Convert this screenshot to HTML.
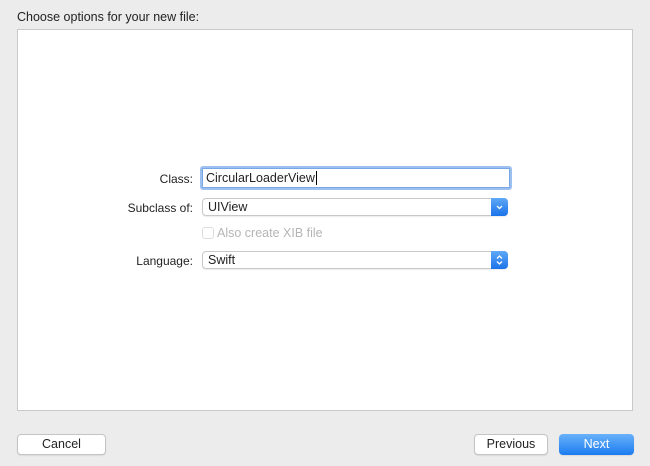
<!DOCTYPE html>
<html><head><style>
body{margin:0;width:650px;height:466px;background:#ececec;font-family:"Liberation Sans",sans-serif;font-size:12px;color:#222;position:relative;overflow:hidden}
.a{position:absolute}
.lbl{position:absolute;right:457px;text-align:right;white-space:nowrap}
.pop{position:absolute;left:202px;width:306px;height:18px;background:#fff;border:1px solid #c8c8c8;border-radius:4px;box-sizing:border-box;box-shadow:0 1px 1px rgba(0,0,0,.08)}
.pop span{position:absolute;left:5px;top:1px;font-size:12.5px}
.pb{position:absolute;right:-1px;top:-1px;width:17px;height:18px;background:linear-gradient(#5fa8f6,#1a73ea);border-radius:0 4px 4px 0}
.btn{position:absolute;top:434px;height:21px;background:#fff;border:1px solid #c4c4c4;border-radius:4px;box-sizing:border-box;text-align:center;line-height:19px;font-size:12.5px;box-shadow:0 1px 1px rgba(0,0,0,.08)}
</style></head><body>
<div class="a" style="left:17px;top:10px;font-size:12.5px">Choose options for your new file:</div>
<div class="a" style="left:17px;top:29px;width:616px;height:382px;background:#fff;border:1px solid #c9c9c9;box-sizing:border-box"></div>
<div class="lbl" style="top:172px">Class:</div>
<div class="a" style="left:200px;top:166px;width:312px;height:24px;border:2px solid #9cc0f0;border-radius:3px;box-sizing:border-box;background:#fff"><div class="a" style="left:0;top:0;right:0;bottom:0;border:1px solid #7aa7e4"></div><span class="a" style="left:4px;top:3px;font-size:12.5px">CircularLoaderView<span style="border-left:1px solid #000;margin-left:1px"></span></span></div>
<div class="lbl" style="top:201px">Subclass of:</div>
<div class="pop" style="top:198px"><span>UIView</span><div class="pb"><svg width="17" height="18"><path d="M6 8l2.5 2.5L11 8" stroke="#fff" stroke-width="1.3" fill="none"/></svg></div></div>
<div class="a" style="left:202px;top:227px;width:12px;height:12px;border:1px solid #ddd;border-radius:3px;box-sizing:border-box;background:#fff"></div>
<div class="a" style="left:217px;top:226px;color:#b5b5b5;font-size:12.5px">Also create XIB file</div>
<div class="lbl" style="top:254px">Language:</div>
<div class="pop" style="top:251px"><span>Swift</span><div class="pb"><svg width="17" height="18"><path d="M6 7.5l2.5-2.5L11 7.5M6 10.5l2.5 2.5L11 10.5" stroke="#fff" stroke-width="1.3" fill="none"/></svg></div></div>
<div class="btn" style="left:17px;width:89px">Cancel</div>
<div class="btn" style="left:474px;width:74px">Previous</div>
<div class="btn" style="left:559px;width:75px;border:none;background:linear-gradient(#69b1fa,#1b7cf0);color:#fff;line-height:21px">Next</div>
</body></html>
